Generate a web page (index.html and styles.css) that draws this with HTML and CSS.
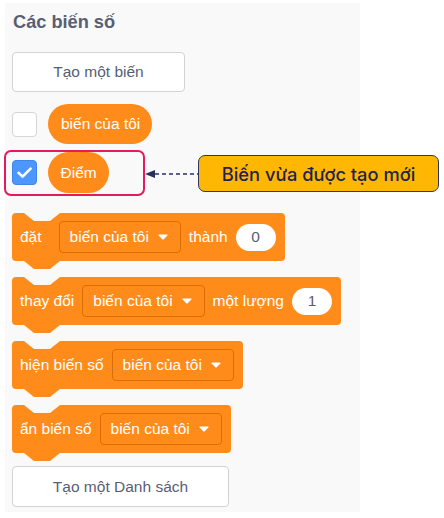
FILE: index.html
```html
<!DOCTYPE html>
<html lang="vi">
<head>
<meta charset="utf-8">
<title>Các biến số</title>
<link rel="stylesheet" href="styles.css">
</head>
<body>
<div class="panel">
  <div class="title">Các biến số</div>
  <button class="make-btn make-var">Tạo một biến</button>
  <div class="var-row row-first">
    <span class="checkbox"></span>
    <span class="reporter">biến của tôi</span>
  </div>
  <div class="highlight">
    <div class="var-row row-new">
      <span class="checkbox checked"><svg width="25" height="25" viewBox="0 0 25 25"><path d="M6.5 12.8 L10.6 16.6 L18.6 8.6" fill="none" stroke="#fff" stroke-width="2.6" stroke-linecap="round" stroke-linejoin="round"/></svg></span>
      <span class="reporter">Điểm</span>
    </div>
  </div>
  <div class="blocks">
    <div class="block">
      <span class="label label-set">đặt</span>
      <span class="dropdown">biến của tôi<svg class="caret" width="10" height="6" viewBox="0 0 10 6"><path d="M1 1 L9 1 L5 5 Z" fill="#fff" stroke="#fff" stroke-width="1.2" stroke-linejoin="round"/></svg></span>
      <span class="label">thành</span>
      <span class="num">0</span>
    </div>
    <div class="block">
      <span class="label">thay đổi</span>
      <span class="dropdown">biến của tôi<svg class="caret" width="10" height="6" viewBox="0 0 10 6"><path d="M1 1 L9 1 L5 5 Z" fill="#fff" stroke="#fff" stroke-width="1.2" stroke-linejoin="round"/></svg></span>
      <span class="label">một lượng</span>
      <span class="num">1</span>
    </div>
    <div class="block">
      <span class="label">hiện biến số</span>
      <span class="dropdown">biến của tôi<svg class="caret" width="10" height="6" viewBox="0 0 10 6"><path d="M1 1 L9 1 L5 5 Z" fill="#fff" stroke="#fff" stroke-width="1.2" stroke-linejoin="round"/></svg></span>
    </div>
    <div class="block">
      <span class="label">ẩn biến số</span>
      <span class="dropdown">biến của tôi<svg class="caret" width="10" height="6" viewBox="0 0 10 6"><path d="M1 1 L9 1 L5 5 Z" fill="#fff" stroke="#fff" stroke-width="1.2" stroke-linejoin="round"/></svg></span>
    </div>
  </div>
  <button class="make-btn make-list">Tạo một Danh sách</button>

  <svg class="pointer" width="54" height="10" viewBox="0 0 54 10">
    <path d="M0 5 L10 1 L10 9 Z" fill="#27305c"/>
    <line x1="10" y1="5" x2="54" y2="5" stroke="#27305c" stroke-width="1.5" stroke-dasharray="4 3"/>
  </svg>
  <div class="callout">Biến vừa được tạo mới</div>
</div>
</body>
</html>
```

FILE: styles.css
```css
html, body {
  margin: 0;
  padding: 0;
  background: #ffffff;
}

body {
  width: 444px;
  height: 518px;
  overflow: hidden;
  font-family: "Liberation Sans", Arial, sans-serif;
}

.panel {
  position: relative;
  margin: 3px 0 0 5px;
  width: 355px;
  height: 509px;
  box-sizing: border-box;
  padding: 9px 0 0 7px;
  background: #f9f9f9;
}

.title {
  height: 20px;
  line-height: 20px;
  padding-left: 1px;
  font-size: 18.2px;
  font-weight: bold;
  color: #575e75;
}

.make-btn {
  display: block;
  box-sizing: border-box;
  height: 40px;
  margin: 0;
  padding: 0;
  background: #ffffff;
  border: 1px solid #d3d3d3;
  border-radius: 4px;
  font-family: "Liberation Sans", Arial, sans-serif;
  font-size: 15.5px;
  color: #575e75;
  text-align: center;
}

.make-var {
  width: 173px;
  margin-top: 20px;
}

.make-list {
  width: 217px;
  height: 41px;
  margin-top: 13px;
}

.var-row {
  display: flex;
  align-items: center;
  gap: 11px;
}

.row-first {
  margin-top: 12px;
  height: 40px;
}

.row-new {
  height: 41px;
}

.checkbox {
  display: flex;
  width: 25px;
  height: 25px;
  box-sizing: border-box;
  border: 1px solid #d6d6d6;
  border-radius: 4px;
  background: #ffffff;
}

.checkbox.checked {
  background: #4c97ff;
  border-color: #3f86ea;
}

.checkbox.checked svg {
  margin: -1px;
}

.reporter {
  display: flex;
  align-items: center;
  height: 100%;
  padding: 0 12px 0 13px;
  border-radius: 21px;
  background: #ff8c1a;
  color: #ffffff;
  font-size: 15.5px;
}

.highlight {
  width: 141px;
  box-sizing: border-box;
  margin: 6px 0 0 -8px;
  padding: 0 0 1px 5.5px;
  border: 2.5px solid #e8185c;
  border-radius: 7px;
  border-top-width: 2px;
}

.blocks {
  display: flex;
  flex-direction: column;
  align-items: flex-start;
  gap: 16px;
  margin-top: 17px;
}

.block {
  position: relative;
  display: flex;
  align-items: center;
  gap: 8px;
  height: 48px;
  padding: 0 9px 0 8px;
  background: #ff8c1a;
  border-radius: 4px;
  color: #ffffff;
  font-size: 15.5px;
}

.block::before,
.block::after {
  content: "";
  position: absolute;
  left: 12px;
  width: 36px;
  height: 8px;
  clip-path: polygon(0 0, 36px 0, 26px 8px, 10px 8px);
}

.block::before {
  top: 0;
  background: #f9f9f9;
}

.block::after {
  top: 100%;
  background: #ff8c1a;
}

.label {
  white-space: nowrap;
}

.label-set {
  margin-right: 9px;
}

.dropdown {
  display: flex;
  align-items: center;
  gap: 9px;
  height: 32px;
  box-sizing: border-box;
  padding: 0 12px 0 10px;
  border: 1px solid #db6e00;
  border-radius: 4px;
  white-space: nowrap;
}

.caret {
  display: block;
}

.num {
  display: flex;
  align-items: center;
  justify-content: center;
  min-width: 40px;
  height: 27px;
  border-radius: 14px;
  background: #ffffff;
  color: #575e75;
  font-size: 15.5px;
}

.pointer {
  position: absolute;
  left: 140px;
  top: 166px;
}

.callout {
  position: absolute;
  left: 193px;
  top: 152px;
  width: 241px;
  height: 37px;
  box-sizing: border-box;
  display: flex;
  align-items: center;
  justify-content: center;
  background: #ffb703;
  border: 1px solid #2d3561;
  border-radius: 7px;
  font-family: "Inter", "Noto Sans", sans-serif;
  font-weight: 500;
  font-size: 18.3px;
  color: #1f2452;
  white-space: nowrap;
}
```
